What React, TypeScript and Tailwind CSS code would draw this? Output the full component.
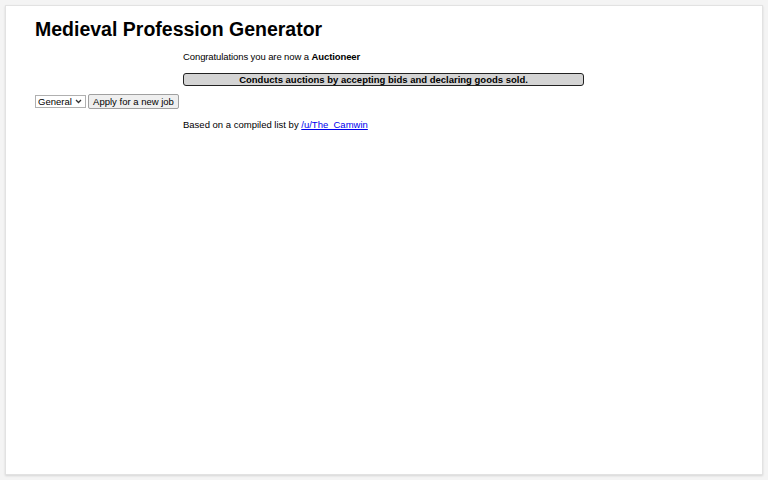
import { useState } from "react";

export default function App() {
  const [category, setCategory] = useState("General");

  return (
    <div className="w-[768px] h-[480px] bg-[#f4f4f4] p-[5px] font-['Liberation_Sans',Arial,sans-serif] text-black">
      <div className="h-full bg-white border border-[#e2e2e2] shadow-[0_1px_2px_rgba(0,0,0,0.12)] pl-[29px] pt-[11px]">
        <h1 className="text-[19.5px] leading-[24px] font-bold">Medieval Profession Generator</h1>

        <div className="flex mt-[9px]">
          <div className="w-[148px] pt-[44px] flex items-start gap-[2px]">
            <div className="relative mt-[1px]">
              <select
                value={category}
                onChange={(e) => setCategory(e.target.value)}
                className="block appearance-none h-[13px] w-[51px] text-[9.5px] leading-[11px] border border-[#b0b0b0] bg-white pl-[2px] pr-[12px] py-0"
              >
                <option>General</option>
              </select>
              <svg
                className="absolute right-[4px] top-[4px] pointer-events-none"
                width="7"
                height="5"
                viewBox="0 0 7 5"
                fill="none"
                stroke="#333"
                strokeWidth="1.3"
              >
                <path d="M1 1l2.5 2.5L6 1" />
              </svg>
            </div>
            <button className="h-[15px] w-[91px] whitespace-nowrap text-[9.5px] leading-[11px] bg-[#efefef] border border-[#a0a0a0] rounded-[2px]">
              Apply for a new job
            </button>
          </div>

          <div className="flex flex-col">
            <p className="text-[9.5px] leading-[12px] mt-[1px] tracking-[-0.1px]">
              Congratulations you are now a <b>Auctioneer</b>
            </p>
            <div className="mt-[10px] w-[401px] h-[13px] bg-[#d4d4d4] border-[1.5px] border-[#222] rounded-[3px] flex items-center justify-center text-[9.5px] leading-[10px] font-bold">
              Conducts auctions by accepting bids and declaring goods sold.
            </div>
            <p className="text-[9.5px] leading-[12px] mt-[33px]">
              Based on a compiled list by{" "}
              <a href="#" className="text-[#0000ee] underline">
                /u/The_Camwin
              </a>
            </p>
          </div>
        </div>
      </div>
    </div>
  );
}
